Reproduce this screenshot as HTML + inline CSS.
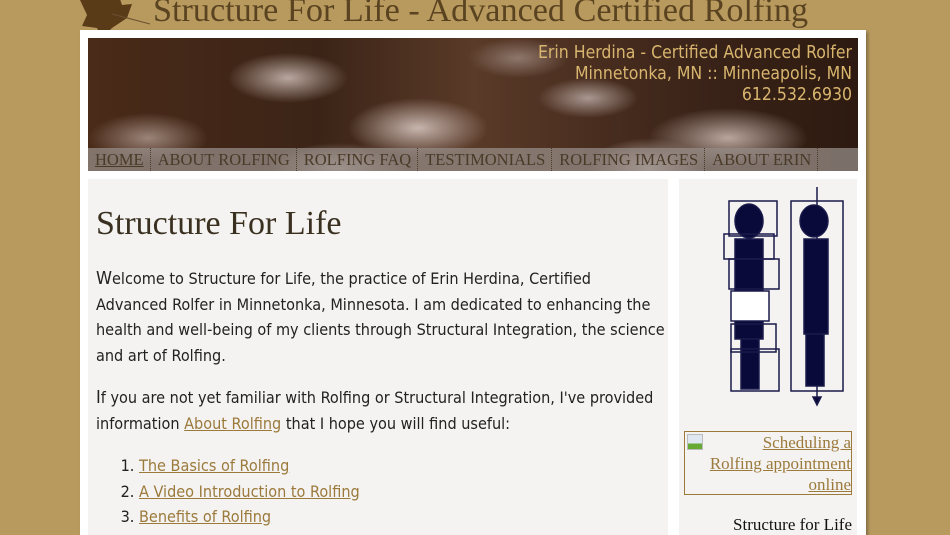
<!DOCTYPE html>
<html><head><meta charset="utf-8"><style>
html,body{margin:0;width:950px;height:535px;overflow:hidden}
body{background:#b99a5e;position:relative;font-family:"Liberation Sans",sans-serif}
.title{position:absolute;left:153px;top:-8px;font:34.2px "Liberation Serif",serif;color:#5a4320;white-space:nowrap}
.leaf{position:absolute;left:72px;top:-10px}
.wrap{position:absolute;left:80px;top:30px;width:786px;height:520px;background:#fff;box-shadow:2px 2px 3px rgba(0,0,0,.3)}
.hdr{position:absolute;left:8px;top:8px;width:770px;height:133px;overflow:hidden;background:
radial-gradient(ellipse 60px 25px at 200px 40px,#b9a79f,transparent),
radial-gradient(ellipse 70px 30px at 330px 90px,#c7b5ad,transparent),
radial-gradient(ellipse 50px 20px at 500px 60px,#a99790,transparent),
radial-gradient(ellipse 80px 30px at 640px 100px,#b8a59c,transparent),
radial-gradient(ellipse 60px 25px at 60px 100px,#9b8479,transparent),
radial-gradient(ellipse 50px 20px at 430px 20px,#8e776c,transparent),
radial-gradient(ellipse 60px 30px at 560px 130px,#c4b2aa,transparent),
radial-gradient(ellipse 70px 25px at 250px 130px,#b0a098,transparent),
linear-gradient(90deg,#4a2a18,#3b2417 30%,#5a3a28 50%,#3a2318 80%,#2d1a10)}
.info{position:absolute;right:6px;top:5px;text-align:right;color:#d8b56e;font:17.5px/21px "DejaVu Sans Condensed","DejaVu Sans",sans-serif}
.nav{position:absolute;left:0;bottom:0;width:770px;height:23px;background:rgba(150,140,135,.75);font:16.5px/23px "Liberation Serif",serif;color:#4a3a28;white-space:nowrap}
.nav span{display:inline-block;padding:0 6px 0 7px;border-right:1px dotted #4a3a28;height:23px}
.main{position:absolute;left:8px;top:149px;width:580px;height:380px;background:#f4f3f1}
.side{position:absolute;left:599px;top:149px;width:178px;height:380px;background:#f4f3f1}
h1{font:normal 34px "Liberation Serif",serif;color:#3a3020;margin:0;position:absolute;left:8px;top:26px}
.txt{position:absolute;left:8px;top:87px;width:570px;font:16.1px/25.5px "DejaVu Sans Condensed","Liberation Sans",sans-serif;color:#222;white-space:nowrap}
.txt p{margin:0 0 17px}
.txt b{font-weight:normal;font-size:18px}
a{color:#9b7a3c;text-decoration:underline}
ol{margin:0;padding-left:43px}
</style></head><body>
<svg class="leaf" width="80" height="50" viewBox="0 0 80 50"><path d="M8 10 L20 2 L30 10 L45 0 L50 15 L60 14 L55 28 L40 38 L30 48 L25 38 L10 36 L15 25 Z" fill="#5a3b18"/><line x1="40" y1="24" x2="78" y2="34" stroke="#6b5030" stroke-width="1"/></svg>
<div class="title">Structure For Life - Advanced Certified Rolfing</div>
<div class="wrap">
<div class="hdr"><div class="info">Erin Herdina - Certified Advanced Rolfer<br>Minnetonka, MN :: Minneapolis, MN<br>612.532.6930</div>
<div class="nav"><span style="text-decoration:underline">HOME</span><span>ABOUT ROLFING</span><span>ROLFING FAQ</span><span>TESTIMONIALS</span><span>ROLFING IMAGES</span><span>ABOUT ERIN</span></div></div>
<div class="main"><h1>Structure For Life</h1>
<div class="txt"><p><b>W</b>elcome to Structure for Life, the practice of Erin Herdina, Certified<br>Advanced Rolfer in Minnetonka, Minnesota. I am dedicated to enhancing the<br>health and well-being of my clients through Structural Integration, the science<br>and art of Rolfing.</p>
<p><b>I</b>f you are not yet familiar with Rolfing or Structural Integration, I've provided<br>information <a>About Rolfing</a> that I hope you will find useful:</p>
<ol><li><a>The Basics of Rolfing</a></li><li><a>A Video Introduction to Rolfing</a></li><li><a>Benefits of Rolfing</a></li></ol></div></div>
<div class="side">
<svg width="178" height="230" viewBox="0 0 178 230" style="position:absolute;left:0;top:0"><g fill="#0a0a3a" stroke="#1a1a4a" stroke-width="1.5">
<rect x="50" y="22" width="48" height="35" fill="none"/><ellipse cx="70" cy="42" rx="14" ry="17"/><rect x="56" y="60" width="28" height="100"/><rect x="62" y="160" width="18" height="50"/><rect x="52" y="112" width="38" height="30" fill="#fff"/>
<rect x="45" y="55" width="50" height="25" fill="none"/><rect x="50" y="80" width="50" height="30" fill="none"/><rect x="52" y="145" width="45" height="28" fill="none"/><rect x="52" y="170" width="48" height="42" fill="none"/>
<rect x="112" y="22" width="52" height="190" fill="none"/><line x1="138" y1="8" x2="138" y2="220"/><ellipse cx="135" cy="42" rx="14" ry="16"/><rect x="125" y="60" width="24" height="95"/><rect x="127" y="155" width="18" height="52"/>
<path d="M134 218 L142 218 L138 226Z"/></g></svg>
<div style="position:absolute;left:5px;top:252px;width:166px;height:62px;border:1px solid #9b7a3c;font:17px/21px 'Liberation Serif',serif"><div style="position:absolute;left:2px;top:2px;width:14px;height:14px;border:1px solid #bbb;background:linear-gradient(#dfe8f0 60%,#6a3 60%)"></div><div style="text-align:right"><a>Scheduling a</a><br><a>Rolfing appointment</a><br><a>online</a></div></div>
<div style="position:absolute;right:5px;top:336px;font:17px 'Liberation Serif',serif;color:#111">Structure for Life</div>
</div></div>
</body></html>
